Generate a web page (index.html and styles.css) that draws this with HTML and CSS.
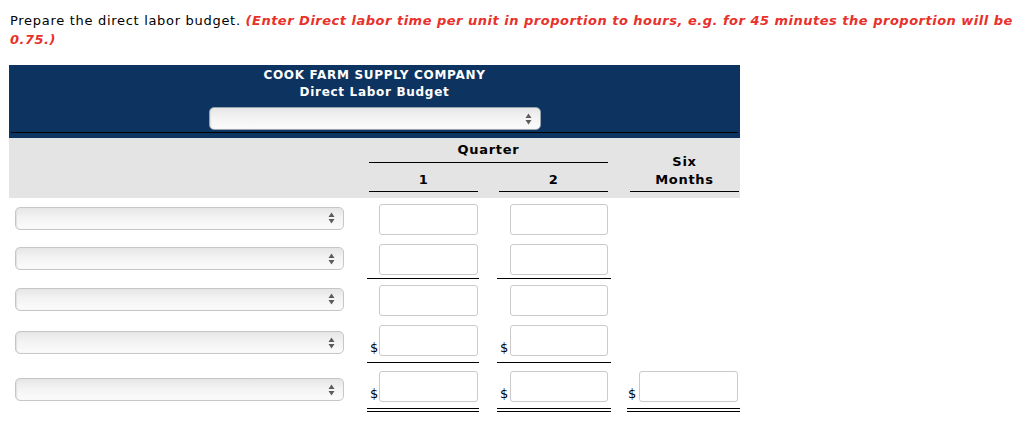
FILE: index.html
```html
<!DOCTYPE html>
<html>
<head>
<meta charset="utf-8"/>
<title>Direct Labor Budget</title>
<link rel="stylesheet" href="styles.css">
</head>
<body>

<p class="prompt">Prepare the direct labor budget. <em>(Enter Direct labor time per unit in proportion to hours, e.g. for 45 minutes the proportion will be 0.75.)</em></p>

<div class="sheet">
  <div class="head">
    <div class="head-in">
      <div class="title">COOK FARM SUPPLY COMPANY</div>
      <div class="title">Direct Labor Budget</div>
      <div class="picker picker-wide">
        <svg width="7" height="12" viewBox="0 0 7 12"><polygon points="0.5,5 3.5,0.5 6.5,5"/><polygon points="0.5,7 3.5,11.5 6.5,7"/></svg>
      </div>
    </div>
  </div>

  <div class="colhead">
    <div class="quarter">Quarter</div>
    <div class="qnum q1">1</div>
    <div class="qnum q2">2</div>
    <div class="six">Six<br>Months</div>
  </div>

  <!-- row 1 -->
  <div class="line">
    <div class="label"><div class="picker"><svg width="7" height="12" viewBox="0 0 7 12"><polygon points="0.5,5 3.5,0.5 6.5,5"/><polygon points="0.5,7 3.5,11.5 6.5,7"/></svg></div></div>
    <div class="amt c1"><input type="text"></div>
    <div class="amt c2"><input type="text"></div>
  </div>

  <!-- row 2 -->
  <div class="line">
    <div class="label"><div class="picker"><svg width="7" height="12" viewBox="0 0 7 12"><polygon points="0.5,5 3.5,0.5 6.5,5"/><polygon points="0.5,7 3.5,11.5 6.5,7"/></svg></div></div>
    <div class="amt c1 ul"><input type="text"></div>
    <div class="amt c2 ul"><input type="text"></div>
  </div>

  <!-- row 3 -->
  <div class="line">
    <div class="label"><div class="picker"><svg width="7" height="12" viewBox="0 0 7 12"><polygon points="0.5,5 3.5,0.5 6.5,5"/><polygon points="0.5,7 3.5,11.5 6.5,7"/></svg></div></div>
    <div class="amt c1"><input type="text"></div>
    <div class="amt c2"><input type="text"></div>
  </div>

  <!-- row 4 -->
  <div class="line sub">
    <div class="label"><div class="picker"><svg width="7" height="12" viewBox="0 0 7 12"><polygon points="0.5,5 3.5,0.5 6.5,5"/><polygon points="0.5,7 3.5,11.5 6.5,7"/></svg></div></div>
    <div class="amt c1 ul"><span class="cur">$</span><input type="text"></div>
    <div class="amt c2 ul"><span class="cur">$</span><input type="text"></div>
  </div>

  <!-- row 5 -->
  <div class="line total">
    <div class="label"><div class="picker"><svg width="7" height="12" viewBox="0 0 7 12"><polygon points="0.5,5 3.5,0.5 6.5,5"/><polygon points="0.5,7 3.5,11.5 6.5,7"/></svg></div></div>
    <div class="amt c1 dbl"><span class="cur">$</span><input type="text"></div>
    <div class="amt c2 dbl"><span class="cur">$</span><input type="text"></div>
    <div class="amt c3 dbl"><span class="cur">$</span><input type="text"></div>
  </div>
</div>

</body>
</html>
```

FILE: styles.css
```css
body {
   margin: 0;
   padding: 0 0 0 9px;
   font-family: "DejaVu Sans", Verdana, sans-serif;
   font-size: 13px;
   letter-spacing: 0.7px;
   color: #000;
   background-color: white;
}

.prompt {
   margin: 11px 0 16px 1px;
   line-height: 19px;
}

.prompt em {
   color: #e8312a;
   font-weight: bold;
   letter-spacing: 0.5px;
}

.sheet {
   width: 731px;
}

/* dark title block */
.head {
   background-color: #0d3461;
   padding: 2px 2px 5px;
}

.head-in {
   border-bottom: 1px solid #000;
   padding-bottom: 2px;
   text-align: center;
   color: #fff;
}

.title {
   font-size: 12px;
   font-weight: bold;
   line-height: 17px;
}

.picker {
   display: flex;
   justify-content: flex-end;
   align-items: center;
   box-sizing: border-box;
   width: 329px;
   height: 23px;
   padding-right: 8px;
   border: 1px solid #c6c6c6;
   border-radius: 5px;
   background: linear-gradient(#e6e6e6, #f3f3f3 45%, #fbfbfb);
   box-shadow: inset 1px 0 1px #e0e0e0;
}

.picker svg {
   fill: #5c5c5c;
}

.picker-wide {
   width: 332px;
   margin: 6px auto 0;
   border-color: #9aa4b0;
}

/* grey column header */
.colhead,
.line {
   display: grid;
   grid-template-columns: 358px 112px 18px 114px 16px 113px;
}

.colhead {
   background-color: #e4e4e4;
   padding-bottom: 6px;
   font-weight: bold;
   line-height: 18px;
   text-align: center;
}

.quarter {
   grid-column: 2 / 5;
   grid-row: 1;
   margin: 0 3px 0 2px;
   padding: 3px 0 3px;
   border-bottom: 1px solid #000;
}

.qnum {
   grid-row: 2;
   padding: 8px 0 2px;
   border-bottom: 1px solid #000;
}

.q1 {
   grid-column: 2;
   margin: 0 1px 0 2px;
}

.q2 {
   grid-column: 4;
   margin: 0 3px 0 2px;
}

.six {
   grid-column: 6;
   grid-row: 1 / 3;
   align-self: end;
   margin: 0 1px 0 3px;
   padding-bottom: 2px;
   border-bottom: 1px solid #000;
}

/* body rows */
.label {
   grid-column: 1;
   align-self: center;
   padding-left: 6px;
}

.amt {
   display: flex;
   align-items: flex-end;
   padding: 6px 2px 3px 3px;
}

.c1 { grid-column: 2; padding-right: 1px; }
.c2 { grid-column: 4; padding-right: 3px; }
.c3 { grid-column: 6; padding-left: 1px; padding-right: 2px; }

.amt input {
   box-sizing: border-box;
   width: 99px;
   height: 31px;
   margin: 0 0 0 auto;
   border: 1px solid #cacaca;
   border-radius: 3px;
   background: #fff;
}

.c2 input { width: 98px; }

.cur {
   line-height: 15px;
   padding-bottom: 1px;
}

.ul {
   border-bottom: 1px solid #000;
}

.dbl {
   border-bottom: 4px double #000;
}

.sub .amt {
   padding-bottom: 6px;
}

.sub .label {
   padding-top: 3px;
}

.total .amt {
   padding-top: 8px;
   padding-bottom: 6px;
}

.total .label {
   padding-top: 4px;
}
```
